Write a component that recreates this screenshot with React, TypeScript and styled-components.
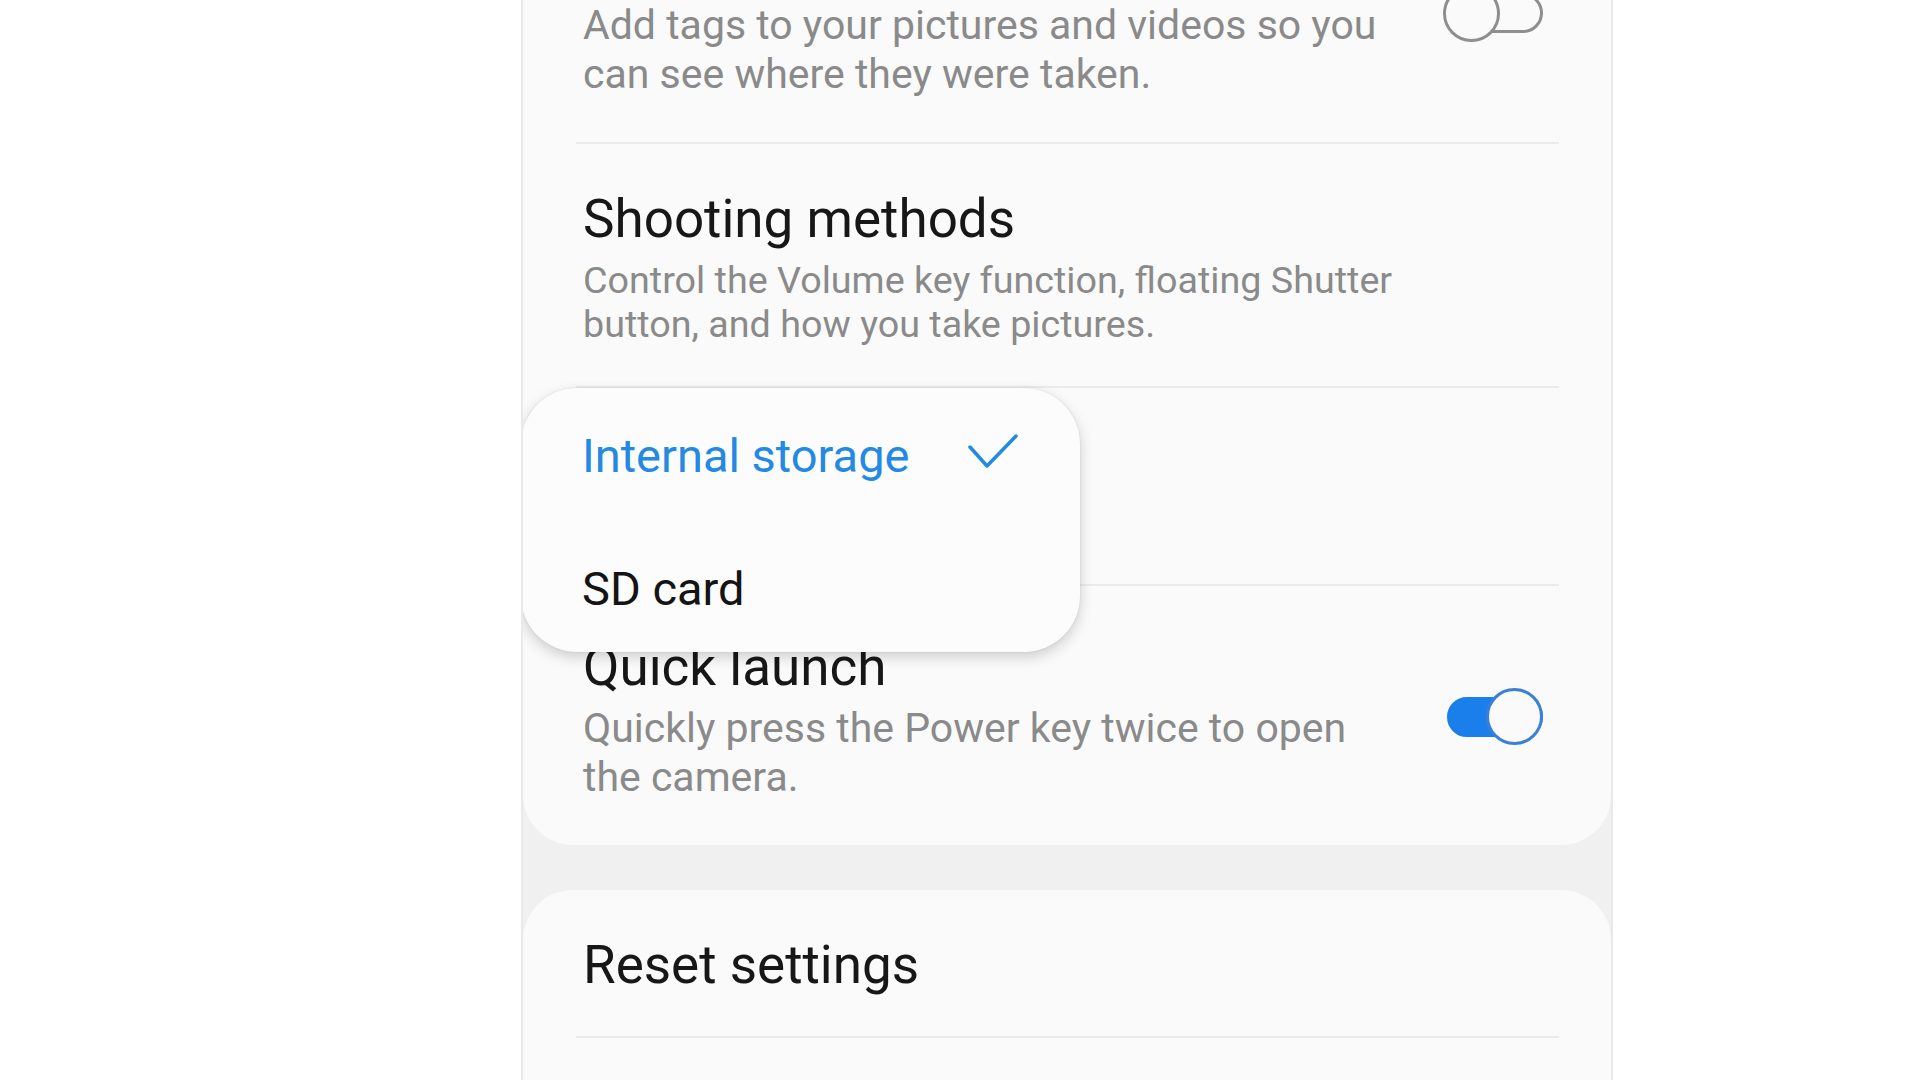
import React from "react";
import styled, { createGlobalStyle } from "styled-components";

const GlobalStyle = createGlobalStyle`
  html, body {
    margin: 0;
    padding: 0;
    background: #ffffff;
  }
  body {
    font-family: Roboto, "Noto Sans", "Liberation Sans", sans-serif;
  }
`;

const Page = styled.div`
  height: 100vh;
  overflow: hidden;
  display: flex;
  padding-left: 521px;
  box-sizing: border-box;
`;

const Screen = styled.div`
  width: 1092px;
  height: 100%;
  box-sizing: border-box;
  background: #f0f0f0;
  border-left: 2px solid #e9e9e9;
  border-right: 2px solid #e9e9e9;
  overflow: hidden;
`;

// the list is scrolled: the first row's title sits above the viewport
const List = styled.div`
  display: flex;
  flex-direction: column;
  gap: 45px;
  margin-top: -112px;
`;

const Card = styled.section`
  background: #fafafa;
  border-radius: 50px;
  display: flex;
  flex-direction: column;
`;

const Row = styled.div<{ $pt: number; $pb: number }>`
  position: relative;
  display: flex;
  align-items: center;
  gap: 40px;
  padding: ${(p) => p.$pt}px 68px ${(p) => p.$pb}px 60px;
`;

const TextCol = styled.div<{ $gap?: number }>`
  flex: 1;
  display: flex;
  flex-direction: column;
  gap: ${(p) => p.$gap ?? 6}px;
`;

const Title = styled.div`
  font-size: 53px;
  line-height: 60px;
  color: #171717;
  white-space: nowrap;
`;

const Summary = styled.div<{ $size: number; $lh: number; $blue?: boolean }>`
  font-size: ${(p) => p.$size}px;
  line-height: ${(p) => p.$lh}px;
  color: ${(p) => (p.$blue ? "#2389e3" : "#8a8a8a")};
  white-space: nowrap;
`;

const Divider = styled.div`
  height: 2px;
  margin: 0 52px 0 53px;
  background: #ebebeb;
`;

const Track = styled.span<{ $on?: boolean; $dy: number }>`
  position: relative;
  flex: none;
  width: 96px;
  height: 40px;
  box-sizing: border-box;
  border-radius: 20px;
  border: 3px solid ${(p) => (p.$on ? "#1a7fea" : "#8e8e8e")};
  background: ${(p) => (p.$on ? "#1a7fea" : "transparent")};
  transform: translateY(${(p) => p.$dy}px);
`;

const Knob = styled.span<{ $on?: boolean }>`
  position: absolute;
  top: 50%;
  width: 57px;
  height: 57px;
  margin-top: -28.5px;
  box-sizing: border-box;
  border-radius: 50%;
  background: #fafafa;
  border: 3px solid ${(p) => (p.$on ? "#3a80d6" : "#8e8e8e")};
  ${(p) => (p.$on ? "right: -3px;" : "left: -7px;")}
`;

const Popup = styled.div`
  position: absolute;
  z-index: 2;
  top: 0;
  left: -2px;
  width: 559px;
  padding-top: 2px;
  box-sizing: border-box;
  background: #fcfcfc;
  border-radius: 56px;
  box-shadow: 0 5px 14px rgba(0, 0, 0, 0.18), 0 0 2px rgba(0, 0, 0, 0.1);
  display: flex;
  flex-direction: column;
`;

const Option = styled.div<{ $selected?: boolean; $nudge?: number }>`
  height: 131px;
  box-sizing: border-box;
  padding: ${(p) => p.$nudge ?? 0}px 62px 0 61px;
  display: flex;
  align-items: center;
  font-size: 47px;
  line-height: 60px;
  color: ${(p) => (p.$selected ? "#2389e3" : "#141414")};

  svg {
    margin-left: auto;
    margin-bottom: 8px;
  }
`;

const Toggle = ({ on, dy = 0 }: { on?: boolean; dy?: number }) => (
  <Track $on={on} $dy={dy}>
    <Knob $on={on} />
  </Track>
);

const Check = () => (
  <svg width={50} height={36} viewBox="0 0 50 36" fill="none">
    <polyline
      points="2,13 19,32 48,2"
      stroke="#2389e3"
      strokeWidth={3.5}
      strokeLinecap="round"
      strokeLinejoin="round"
    />
  </svg>
);

export default function App() {
  return (
    <>
      <GlobalStyle />
      <Page>
        <Screen>
          <List>
            <Card>
              <Row $pt={47} $pb={43}>
                <TextCol>
                  <Title>Location tags</Title>
                  <Summary $size={41} $lh={49}>
                    Add tags to your pictures and videos so you
                    <br />
                    can see where they were taken.
                  </Summary>
                </TextCol>
                <Toggle dy={-4} />
              </Row>
              <Divider />
              <Row $pt={45} $pb={40}>
                <TextCol $gap={9}>
                  <Title>Shooting methods</Title>
                  <Summary $size={37.7} $lh={44}>
                    Control the Volume key function, floating Shutter
                    <br />
                    button, and how you take pictures.
                  </Summary>
                </TextCol>
              </Row>
              <Divider />
              <Row $pt={40} $pb={41}>
                <TextCol>
                  <Title>Storage location</Title>
                  <Summary $size={41} $lh={49} $blue>
                    Internal storage
                  </Summary>
                </TextCol>
                <Popup>
                  <Option $selected>
                    Internal storage
                    <Check />
                  </Option>
                  <Option $nudge={5}>SD card</Option>
                </Popup>
              </Row>
              <Divider />
              <Row $pt={51} $pb={43}>
                <TextCol $gap={7}>
                  <Title>Quick launch</Title>
                  <Summary $size={41} $lh={49}>
                    Quickly press the Power key twice to open
                    <br />
                    the camera.
                  </Summary>
                </TextCol>
                <Toggle on dy={-3} />
              </Row>
            </Card>
            <Card>
              <Row $pt={45} $pb={41}>
                <TextCol>
                  <Title>Reset settings</Title>
                </TextCol>
              </Row>
              <Divider />
              <Row $pt={45} $pb={45}>
                <TextCol>
                  <Title>Contact us</Title>
                </TextCol>
              </Row>
            </Card>
          </List>
        </Screen>
      </Page>
    </>
  );
}
